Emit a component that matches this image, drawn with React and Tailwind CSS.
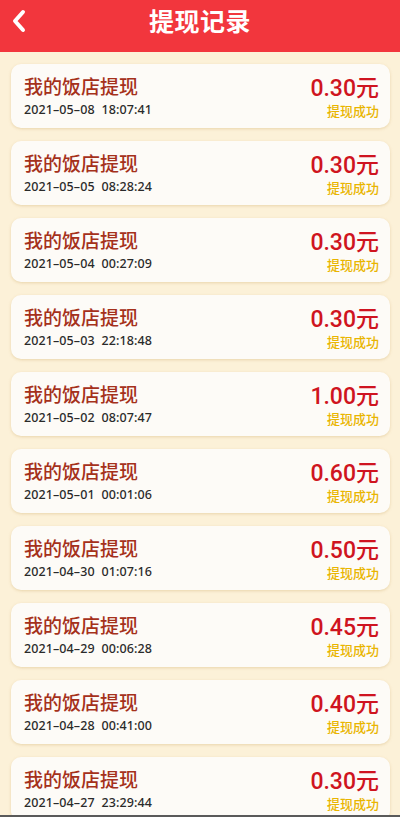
import React from "react";

const rows = [
  ["2021–05–08  18:07:41", "0.30"],
  ["2021–05–05  08:28:24", "0.30"],
  ["2021–05–04  00:27:09", "0.30"],
  ["2021–05–03  22:18:48", "0.30"],
  ["2021–05–02  08:07:47", "1.00"],
  ["2021–05–01  00:01:06", "0.60"],
  ["2021–04–30  01:07:16", "0.50"],
  ["2021–04–29  00:06:28", "0.45"],
  ["2021–04–28  00:41:00", "0.40"],
  ["2021–04–27  23:29:44", "0.30"],
];

const font = { fontFamily: '"Noto Sans CJK SC", "Noto Sans", sans-serif' };

export default function App() {
  return (
    <div className="w-[400px] h-[817px] overflow-hidden flex flex-col bg-[#fcf1d8]" style={font}>
      <div className="h-[52px] shrink-0 bg-[#f2363d] relative flex items-center justify-center">
        <svg className="absolute left-[10px] top-[9px]" width="18" height="24" viewBox="0 0 18 24">
          <path d="M13 3 L5 12 L13 21" fill="none" stroke="#fff" strokeWidth="4" strokeLinecap="round" strokeLinejoin="round" />
        </svg>
        <div className="text-white text-[25px] font-bold leading-none tracking-[0.5px] -mt-[12px]">提现记录</div>
      </div>
      <div className="flex-1 overflow-hidden flex flex-col gap-[13px] pt-[12px] px-[11px] pr-[10px]">
        {rows.map(([d, a], i) => (
          <div key={i} className="shrink-0 h-[64px] rounded-[10px] bg-[#fdfbf7] shadow-[0_1px_3px_rgba(200,160,90,0.35)] flex items-center justify-between pl-[13px] pr-[11px]">
            <div className="flex flex-col">
              <div className="text-[19px] font-medium leading-[22px] text-[#a5311b]">我的饭店提现</div>
              <div className="text-[12.5px] font-medium leading-[14px] mt-[6px] text-[#2a2a2a] tracking-[0.1px] whitespace-pre" style={{ fontFamily: '"Noto Sans", sans-serif' }}>{d}</div>
            </div>
            <div className="flex flex-col items-end">
              <div className="text-[23px] leading-[24px] font-medium text-[#cf1420]">
                <span style={{ fontFamily: 'Roboto, "Noto Sans", sans-serif' }}>{a}</span>元
              </div>
              <div className="text-[13px] leading-[14px] mt-[3px] text-[#e9b500] font-medium">提现成功</div>
            </div>
          </div>
        ))}
      </div>
      <div className="h-[2px] shrink-0 bg-[#5a5a5a]" />
    </div>
  );
}
